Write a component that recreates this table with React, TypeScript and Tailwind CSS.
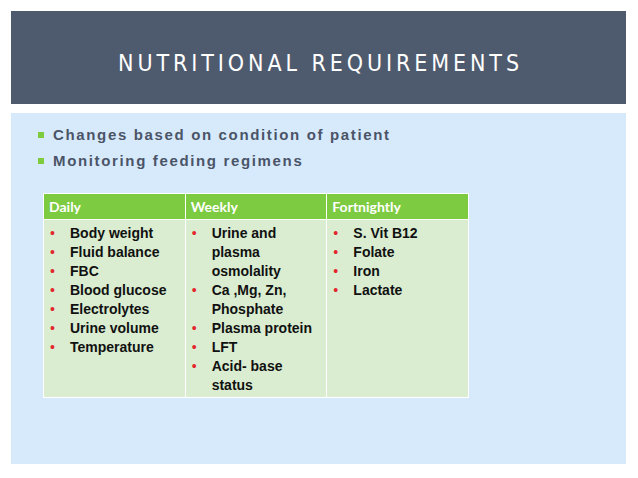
import React from "react";

const cols = [
  { h: "Daily", items: [["Body weight"], ["Fluid balance"], ["FBC"], ["Blood glucose"], ["Electrolytes"], ["Urine volume"], ["Temperature"]] },
  { h: "Weekly", items: [["Urine and", "plasma", "osmolality"], ["Ca ,Mg, Zn,", "Phosphate"], ["Plasma protein"], ["LFT"], ["Acid- base", "status"]] },
  { h: "Fortnightly", items: [["S. Vit B12"], ["Folate"], ["Iron"], ["Lactate"]] },
];

export default function App() {
  return (
    <div className="w-[638px] h-[478px] bg-white relative overflow-hidden pt-[11px] pl-[11px]">
      <div className="w-[615px] h-[93px] bg-[#4e5a6d] flex items-center justify-center">
        <div
          className="text-white text-[23px] tracking-[0.17em] pt-[11px] pl-[4px]"
          style={{ fontFamily: '"DejaVu Sans Condensed", "Liberation Sans", sans-serif' }}
        >
          NUTRITIONAL REQUIREMENTS
        </div>
      </div>
      <div className="mt-[9px] w-[615px] h-[351px] bg-[#d6eafc] pt-[9px]">
        <div
          className="pl-[27px] text-[#4b5467] text-[15px] font-bold tracking-[0.11em] leading-[26px]"
          style={{ fontFamily: '"Liberation Sans", sans-serif' }}
        >
          <div className="flex items-center gap-[9px]">
            <span className="w-[6px] h-[6px] bg-[#7ccc3c] inline-block" />
            <span>Changes based on condition of patient</span>
          </div>
          <div className="flex items-center gap-[9px]">
            <span className="w-[6px] h-[6px] bg-[#7ccc3c] inline-block" />
            <span>Monitoring feeding regimens</span>
          </div>
        </div>
        <div className="ml-[32px] mt-[19px] w-[426px] grid grid-cols-3 border border-white bg-white gap-[1px]">
          {cols.map((c) => (
            <div
              key={c.h}
              className="h-[25px] bg-[#7dcb40] text-white font-bold text-[14px] flex items-center pl-[5px]"
              style={{ fontFamily: 'Lato, "Liberation Sans", sans-serif' }}
            >
              {c.h}
            </div>
          ))}
          {cols.map((c) => (
            <div
              key={c.h + "b"}
              className="bg-[#daedd0] pt-[4px] pb-[3px] pl-[6px] h-[177px]"
              style={{ fontFamily: '"Liberation Sans", sans-serif' }}
            >
              {c.items.map((it, i) => (
                <div key={i} className="flex text-[14px] leading-[19px] text-[#111] font-bold">
                  <span className="w-[20px] text-[#e3262b] font-normal shrink-0">•</span>
                  <div>
                    {it.map((l) => (
                      <div key={l}>{l}</div>
                    ))}
                  </div>
                </div>
              ))}
            </div>
          ))}
        </div>
      </div>
    </div>
  );
}
